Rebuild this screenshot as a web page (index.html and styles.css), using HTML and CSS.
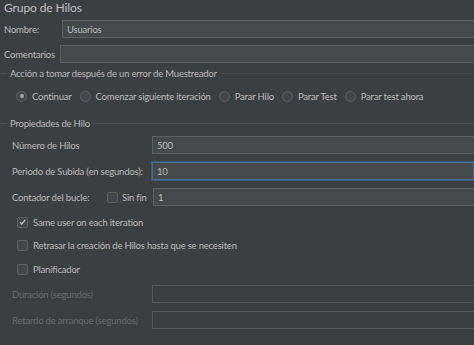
FILE: index.html
```html
<!DOCTYPE html>
<html lang="es">
<head>
    <meta charset="UTF-8">
    <meta name="viewport" content="width=device-width, initial-scale=1.0">
    <title>Grupo de Hilos</title>
    <link rel="stylesheet" href="styles.css">
</head>
<body>
    <div class="panel">
        <h1 class="title">Grupo de Hilos</h1>

        <div class="row row-name">
            <label class="label label-top" for="nombre">Nombre:</label>
            <input type="text" id="nombre" class="field" value="Usuarios">
        </div>

        <div class="row row-comments">
            <label class="label label-top" for="comentarios">Comentarios</label>
            <input type="text" id="comentarios" class="field" value="">
        </div>

        <div class="group-title group-error">
            <span class="group-line-short"></span>
            <span class="group-text">Acción a tomar después de un error de Muestreador</span>
            <span class="group-line"></span>
        </div>

        <div class="radios">
            <label class="option"><span class="radio checked"></span>Continuar</label>
            <label class="option"><span class="radio"></span>Comenzar siguiente iteración</label>
            <label class="option"><span class="radio"></span>Parar Hilo</label>
            <label class="option"><span class="radio"></span>Parar Test</label>
            <label class="option"><span class="radio"></span>Parar test ahora</label>
        </div>

        <div class="group-title group-props">
            <span class="group-line-short"></span>
            <span class="group-text">Propiedades de Hilo</span>
            <span class="group-line"></span>
        </div>

        <div class="props">
            <div class="row row-threads">
                <label class="label label-prop" for="hilos">Número de Hilos</label>
                <input type="text" id="hilos" class="field" value="500">
            </div>

            <div class="row row-ramp">
                <label class="label label-prop" for="subida">Periodo de Subida (en segundos):</label>
                <input type="text" id="subida" class="field field-focus" value="10">
            </div>

            <div class="row row-loop">
                <label class="label label-loop" for="bucle">Contador del bucle:</label>
                <label class="option option-forever"><span class="check"></span>Sin fin</label>
                <input type="text" id="bucle" class="field field-loop" value="1">
            </div>

            <label class="option check-row check-same"><span class="check checked"><svg viewBox="0 0 10 10" width="10" height="10"><path d="M2.2 5.2 L4.2 7.3 L8 2.6" fill="none" stroke="#c4c4c4" stroke-width="1.4"/></svg></span>Same user on each iteration</label>
            <label class="option check-row check-delay"><span class="check"></span>Retrasar la creación de Hilos hasta que se necesiten</label>
            <label class="option check-row check-sched"><span class="check"></span>Planificador</label>

            <div class="row row-duration">
                <label class="label label-prop disabled" for="duracion">Duración (segundos)</label>
                <input type="text" id="duracion" class="field field-disabled" value="" disabled>
            </div>

            <div class="row row-delay">
                <label class="label label-prop disabled" for="retardo">Retardo de arranque (segundos)</label>
                <input type="text" id="retardo" class="field field-disabled" value="" disabled>
            </div>
        </div>
    </div>
</body>
</html>
```

FILE: styles.css
```css
* {
    margin: 0;
    padding: 0;
    box-sizing: border-box;
}

body {
    font-family: Lato, 'Open Sans', sans-serif;
    font-size: 9.5px;
    letter-spacing: -0.2px;
    background: #3c3f41;
    color: #bbbbbb;
    width: 474px;
    height: 345px;
    overflow: hidden;
}

.panel {
    display: flex;
    flex-direction: column;
    padding-left: 4px;
}

.title {
    font-size: 12px;
    font-weight: normal;
    line-height: 16px;
    letter-spacing: -0.1px;
    color: #c0c0c0;
}

.row {
    display: flex;
    align-items: center;
    height: 18px;
}

.label {
    flex-shrink: 0;
    white-space: nowrap;
}

.label-top {
    width: 58px;
}

.row-comments .label-top {
    width: 56px;
}

.field {
    flex: 1;
    min-width: 0;
    height: 18px;
    background: #45494a;
    border: 1px solid #5b5f61;
    border-right: none;
    color: #bbbbbb;
    font-family: inherit;
    font-size: 9.5px;
    letter-spacing: -0.2px;
    padding: 0 4px;
    outline: none;
}

.row-name {
    margin-top: 4px;
}

.row-comments {
    margin-top: 7px;
}

/* titled borders */
.group-title {
    display: flex;
    align-items: center;
    height: 12px;
    margin-left: -4px;
}

.group-line-short {
    width: 7px;
    border-top: 1px solid #4c5052;
}

.group-text {
    padding: 0 4px 0 3px;
    white-space: nowrap;
}

.group-line {
    flex: 1;
    border-top: 1px solid #4c5052;
}

.group-error {
    margin-top: 4px;
}

.group-props {
    margin-top: 14px;
}

.radios {
    display: flex;
    align-items: center;
    height: 14px;
    margin-top: 10px;
    padding-left: 12px;
    gap: 8px;
}

.option {
    display: flex;
    align-items: center;
    gap: 5px;
    white-space: nowrap;
}

.radio {
    flex-shrink: 0;
    width: 11px;
    height: 11px;
    border-radius: 50%;
    border: 1px solid #5c6062;
    background: #43474a;
    display: flex;
    align-items: center;
    justify-content: center;
}

.radio.checked::after {
    content: '';
    width: 4px;
    height: 4px;
    border-radius: 50%;
    background: #a8a8a8;
}

.props {
    display: flex;
    flex-direction: column;
    padding-left: 8px;
}

.label-prop {
    width: 140px;
}

.row-threads {
    margin-top: 7px;
}

.row-ramp {
    margin-top: 8px;
}

.field-focus {
    border: 1px solid #466d94;
    box-shadow: 0 0 0 1px #3d5d7e;
}

.row-loop {
    margin-top: 8px;
}

.label-loop {
    width: 95px;
}

.option-forever {
    width: 46px;
    gap: 4px;
}

.check {
    flex-shrink: 0;
    width: 11px;
    height: 11px;
    border: 1px solid #5c6062;
    border-radius: 2px;
    background: #43474a;
    display: flex;
    align-items: center;
    justify-content: center;
}

.check svg {
    display: block;
}

.check-row {
    height: 14px;
    padding-left: 5px;
}

.check-same {
    margin-top: 9px;
}

.check-delay {
    margin-top: 9px;
}

.check-sched {
    margin-top: 10px;
}

.row-duration {
    margin-top: 9px;
}

.row-delay {
    margin-top: 8px;
}

.disabled {
    color: #65696b;
}

.field-disabled {
    background: #3c3f41;
    border-color: #55585a;
}
```
